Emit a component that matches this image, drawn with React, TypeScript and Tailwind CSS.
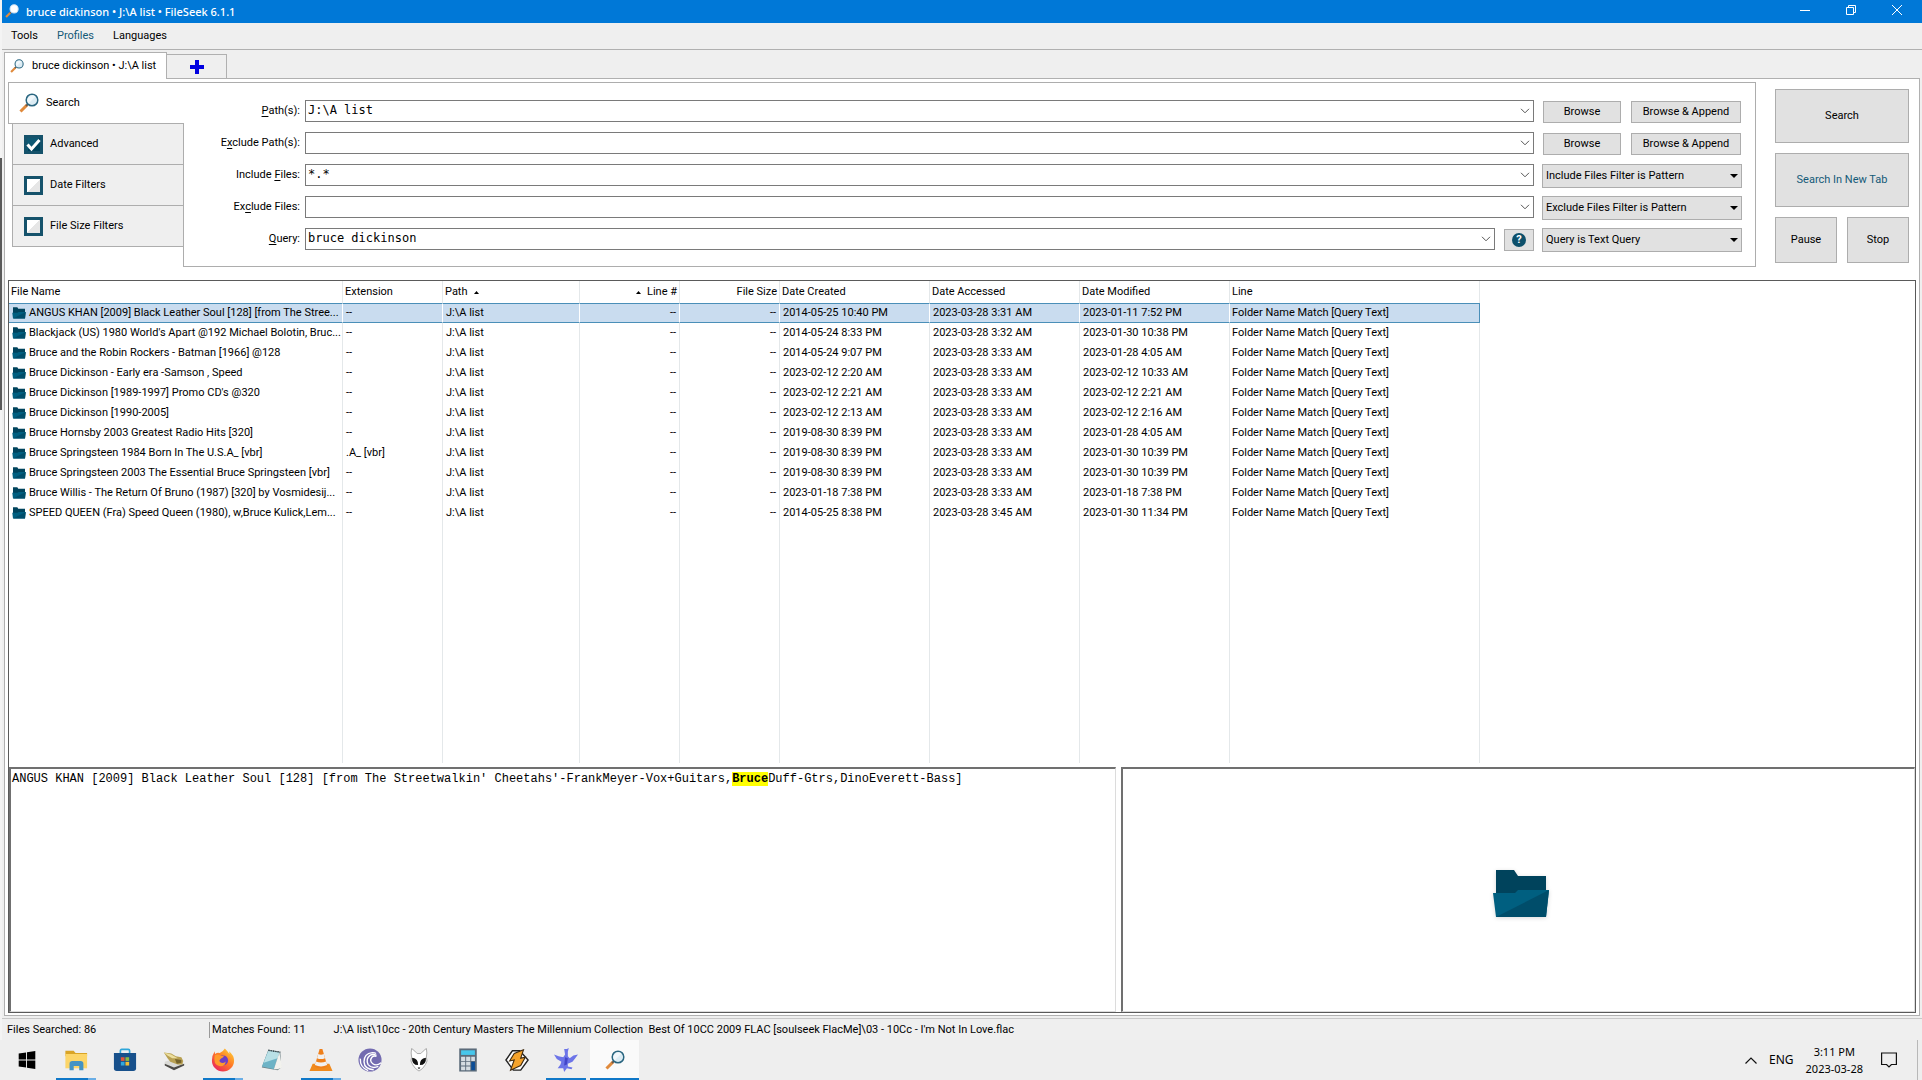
import { useState } from 'react';
import type { ReactNode } from 'react';

const results = [
  { name: 'ANGUS KHAN [2009] Black Leather Soul [128] [from The Stree...', ext: '--', created: '2014-05-25 10:40 PM', accessed: '2023-03-28 3:31 AM', modified: '2023-01-11 7:52 PM' },
  { name: "Blackjack (US) 1980 World's Apart @192 Michael Bolotin, Bruc...", ext: '--', created: '2014-05-24 8:33 PM', accessed: '2023-03-28 3:32 AM', modified: '2023-01-30 10:38 PM' },
  { name: 'Bruce and the Robin Rockers - Batman [1966] @128', ext: '--', created: '2014-05-24 9:07 PM', accessed: '2023-03-28 3:33 AM', modified: '2023-01-28 4:05 AM' },
  { name: 'Bruce Dickinson - Early era -Samson , Speed', ext: '--', created: '2023-02-12 2:20 AM', accessed: '2023-03-28 3:33 AM', modified: '2023-02-12 10:33 AM' },
  { name: "Bruce Dickinson [1989-1997] Promo CD's @320", ext: '--', created: '2023-02-12 2:21 AM', accessed: '2023-03-28 3:33 AM', modified: '2023-02-12 2:21 AM' },
  { name: 'Bruce Dickinson [1990-2005]', ext: '--', created: '2023-02-12 2:13 AM', accessed: '2023-03-28 3:33 AM', modified: '2023-02-12 2:16 AM' },
  { name: 'Bruce Hornsby 2003 Greatest Radio Hits [320]', ext: '--', created: '2019-08-30 8:39 PM', accessed: '2023-03-28 3:33 AM', modified: '2023-01-28 4:05 AM' },
  { name: 'Bruce Springsteen 1984 Born In The U.S.A_ [vbr]', ext: '.A_ [vbr]', created: '2019-08-30 8:39 PM', accessed: '2023-03-28 3:33 AM', modified: '2023-01-30 10:39 PM' },
  { name: 'Bruce Springsteen 2003 The Essential Bruce Springsteen [vbr]', ext: '--', created: '2019-08-30 8:39 PM', accessed: '2023-03-28 3:33 AM', modified: '2023-01-30 10:39 PM' },
  { name: 'Bruce Willis - The Return Of Bruno (1987) [320] by Vosmidesij...', ext: '--', created: '2023-01-18 7:38 PM', accessed: '2023-03-28 3:33 AM', modified: '2023-01-18 7:38 PM' },
  { name: 'SPEED QUEEN (Fra) Speed Queen (1980), w,Bruce Kulick,Lem...', ext: '--', created: '2014-05-25 8:38 PM', accessed: '2023-03-28 3:45 AM', modified: '2023-01-30 11:34 PM' },
];

const columns = [
  { label: 'File Name', width: 'w-[334px]' },
  { label: 'Extension', width: 'w-[100px]' },
  { label: 'Path', width: 'w-[137px]', sort: 'after' },
  { label: 'Line #', width: 'w-[100px]', align: 'text-right', sort: 'before' },
  { label: 'File Size', width: 'w-[100px]', align: 'text-right' },
  { label: 'Date Created', width: 'w-[150px]' },
  { label: 'Date Accessed', width: 'w-[150px]' },
  { label: 'Date Modified', width: 'w-[150px]' },
  { label: 'Line', width: 'w-[250px]' },
];

function Magnifier({ className, lens = '#dcecf4', ring = '#2a6680' }: { className?: string; lens?: string; ring?: string }) {
  return (
    <svg viewBox="0 0 20 20" className={className} aria-hidden="true">
      <path d="M1.5 18.5 8 12" stroke="#e08a3c" strokeWidth="3" />
      <path d="m7 13 2-2" stroke="#6d5a4c" strokeWidth="2" />
      <circle cx="13" cy="7" r="5.8" fill={lens} stroke={ring} strokeWidth="1.5" />
      <path d="M9.5 10.5 16.5 3.5A5 5 0 0 0 9.5 10.5z" fill="#fff" opacity=".6" />
    </svg>
  );
}

function FolderIcon({ className }: { className?: string }) {
  return (
    <svg viewBox="0 0 58 50" className={className} aria-hidden="true">
      <path d="M4 1h18l4 6h28v20H4z" fill="#00435c" />
      <path d="M1 24h22l3-3h31l-3 27H4z" fill="#005f80" />
      <path d="M57 21 4 48h50z" fill="#004d6a" />
    </svg>
  );
}

function SortArrow() {
  return (
    <svg viewBox="0 0 5 3" className="mx-[6px] inline-block h-[3px] w-[5px] align-middle" aria-hidden="true">
      <path d="M0 3h5L2.5 0z" />
    </svg>
  );
}

function ComboBox({ id, value }: { id: string; value: string }) {
  const [text, setText] = useState(value);
  return (
    <div className="flex h-[22px] min-w-0 flex-1 items-center border border-[#7a7a7a] bg-white">
      <input
        id={id}
        value={text}
        onChange={e => setText(e.target.value)}
        className="h-5 min-w-0 flex-1 px-[2px] pb-[2px] font-['DejaVu_Sans_Mono',monospace] text-[12px] leading-4 outline-none"
      />
      <button type="button" aria-label="Show history" className="flex h-5 w-4 items-center justify-center">
        <svg viewBox="0 0 10 6" className="h-[6px] w-[10px]" fill="none" stroke="#555">
          <path d="m1 .8 4 4 4-4" />
        </svg>
      </button>
    </div>
  );
}

function Button({ children, className = '' }: { children: ReactNode; className?: string }) {
  return (
    <button type="button" className={`border border-[#adadad] bg-[#e1e1e1] text-center ${className}`}>
      {children}
    </button>
  );
}

function BrowseButtons() {
  return (
    <div className="flex gap-[10px] pl-[9px] pt-px">
      <Button className="h-[22px] w-[78px]">Browse</Button>
      <Button className="h-[22px] w-[110px]">Browse &amp; Append</Button>
    </div>
  );
}

function FilterSelect({ name, label }: { name: string; label: string }) {
  return (
    <div className="relative ml-2">
      <select aria-label={name} className="block h-6 w-full appearance-none border border-[#adadad] bg-[#e1e1e1] pl-[3px] outline-none">
        <option>{label}</option>
      </select>
      <svg viewBox="0 0 8 4" className="pointer-events-none absolute right-1 top-[10px] h-1 w-2">
        <path d="M0 0h8L4 4z" />
      </svg>
    </div>
  );
}

function FilterTab({ label, on = false }: { label: string; on?: boolean }) {
  const [checked, setChecked] = useState(on);
  return (
    <label className="ml-1 flex h-[41px] items-center gap-[7px] border-x border-b border-[#adadad] bg-[#efefef] pl-[11px]">
      <span className="grid h-[19px] w-[19px]">
        <input
          type="checkbox"
          checked={checked}
          onChange={e => setChecked(e.target.checked)}
          className="col-start-1 row-start-1 h-[19px] w-[19px] appearance-none border-[3px] border-[#15526b] bg-linear-to-br from-white from-50% to-[#e6e6e6] to-50% checked:from-[#0d5873] checked:to-[#00435c]"
        />
        {checked && (
          <svg viewBox="0 0 19 19" className="pointer-events-none col-start-1 row-start-1" fill="none" stroke="#fff" strokeWidth="3">
            <path d="m3.500 9.500 4 4.500 8-9" />
          </svg>
        )}
      </span>
      {label}
    </label>
  );
}

function FieldLabel({ id, before = '', hot, after }: { id: string; before?: string; hot: string; after: string }) {
  return (
    <label htmlFor={id} className="pr-[5px] text-right leading-[22px]">
      {before}
      <u className="underline-offset-2">{hot}</u>
      {after}
    </label>
  );
}

const taskIcons: { name: string; open?: 'many' | 'one' | 'active'; icon: ReactNode }[] = [
  {
    name: 'Start',
    icon: <path d="m4 6 8-1.200v7.700H4zM13 4.600 22 3.300v9.200h-9zM4 13.500h8v7.700L4 20zM13 13.500h9v9.200l-9-1.300z" />,
  },
  {
    name: 'File Explorer',
    open: 'many',
    icon: (
      <>
        <path d="M1.500 3h9l2 2.500H25V9H1.500z" fill="#d9a426" />
        <path d="M1.500 6.500H25V22H1.500z" fill="#fcd568" />
        <path d="M6 24v-7q0-3 3-3h9q3 0 3 3v7h-4.500v-4.500h-6V24z" fill="#4393c4" />
      </>
    ),
  },
  {
    name: 'Microsoft Store',
    icon: (
      <>
        <path d="M8 7V3q0-1.500 1.500-1.500h7Q18 1.500 18 3v4" fill="none" stroke="#2ea6d9" strokeWidth="1.800" />
        <path d="M1 5.500h24V22q0 3-3 3H4q-3 0-3-3z" fill="#17508b" />
        <path d="M8.500 10h4v4h-4z" fill="#e0563a" />
        <path d="M13.500 10h4v4h-4z" fill="#89b940" />
        <path d="M8.500 15h4v4h-4z" fill="#31a8dc" />
        <path d="M13.500 15h4v4h-4z" fill="#f0be36" />
      </>
    ),
  },
  {
    name: 'Organizer',
    icon: (
      <>
        <path d="m3 15 6-2 12 2 3 3-11 4-10-5z" fill="#dadad6" />
        <path d="m3 17 10 4 11-4v2l-11 5-10-5z" fill="#4c4a47" />
        <path d="m2 5 8 1 5 3 6 1 2 4-1 4-5 0-8-3-3-4z" fill="#b8a052" />
        <path d="m2 5 8 2 7 4-6 0-5-3z" fill="#ecdf9f" />
        <path d="m14 12 7 1v3l-5 1z" fill="#75632b" />
      </>
    ),
  },
  {
    name: 'Firefox',
    open: 'many',
    icon: (
      <>
        <defs>
          <linearGradient id="fox" x1="1" y1="0" x2=".2" y2="1">
            <stop offset="0" stopColor="#ffe03a" />
            <stop offset=".5" stopColor="#ff7b26" />
            <stop offset="1" stopColor="#e9205c" />
          </linearGradient>
        </defs>
        <path d="M15 .5q3 3 5 6 0-2-.5-3Q25 8 25 13.500a12 12 0 0 1-24 0Q1 8 4 3.500q0 2 .5 3 2.500-2 5-1Q13 4 15 .5z" fill="url(#fox)" />
        <circle cx="13" cy="13.500" r="5.500" fill="#6c3fc5" />
        <path d="M4 8q3-2 6 0 2 1 4 .5 0 2-3 3-3 2-1 4 3 2 6-1-1 6-7 5-7-2-5-11.500z" fill="#ff9a2b" />
      </>
    ),
  },
  {
    name: 'Notepad',
    icon: (
      <>
        <path d="m9 2 13 2 1 17-4 3-17-3z" fill="#6f8186" />
        <path d="m9 3 12 2-6 18-13-3z" fill="#6db3c6" />
        <path d="m9 3 12 2-2 6L4 16z" fill="#b9e0e6" />
        <path d="m21 5 3 16-5 2-4 0z" fill="#f2f2ee" />
        <path d="M9 2.500 22 4.500" stroke="#3c4a50" strokeWidth="1.500" strokeDasharray="1.500 1" />
      </>
    ),
  },
  {
    name: 'VLC',
    open: 'many',
    icon: (
      <>
        <path d="M4 17h18l3.500 8H.5z" fill="#f08a1d" />
        <path d="M11.500 1h3L20 20q-7 4-14 0z" fill="#ef7f1a" />
        <path d="M10 6.500 8.700 11q4.300 2 8.600 0L16 6.500q-3 1.500-6 0z" fill="#f1f1f1" />
        <path d="m7.500 14.500-1.200 4q6.700 3 13.400 0l-1.200-4q-5.500 2.500-11 0z" fill="#f1f1f1" />
      </>
    ),
  },
  {
    name: 'BitTorrent',
    icon: (
      <>
        <circle cx="13" cy="13" r="12.500" fill="#736bb0" />
        <g fill="none" stroke="#fff" strokeWidth="1.500">
          <path d="M25 16q-5 4-9 1-4-3-1-7 2-2 5-1" />
          <path d="M22 20q-7 3-11-2-3-6 2-10 3-2 7 0" />
          <path d="M17 23.500Q7 23 6.500 15q0-9 9-10 3 0 4 1" />
          <path d="M11 24.500Q2 21 2.500 11.500" />
        </g>
      </>
    ),
  },
  {
    name: 'foobar2000',
    icon: (
      <>
        <path d="M5 .5q4 3 6 5.500h4q2-2.500 6-5.500 1 5 0 9.500 2 4-1 8-3 5-7 7-4-2-7-7-3-4-1-8-1-4.500 0-9.500z" fill="#fff" stroke="#a5a5a5" />
        <path d="M5.500 10.500q7 1 6.500 8-7 0-6.500-8zM20.500 10.500q-7 1-6.500 8 7 0 6.500-8zM11.500 21h3L13 23z" fill="#111" />
      </>
    ),
  },
  {
    name: 'Calculator',
    icon: (
      <>
        <path d="M3.500.5h19v25h-19z" fill="#5b6b7a" />
        <path d="M5.500 2.500h15v5h-15z" fill="#47c7ec" />
        <path d="M5.500 9.500h4.500V14H5.500zM11 9.500h4.500V14H11zM16.500 9.500H20.500V14h-4zM5.500 15h4.500v4H5.500zM11 15h4.500v4H11zM5.500 20h4.500v4H5.500zM11 20h4.500v4H11z" fill="#d5dce2" />
        <path d="M16.500 15h4v9h-4z" fill="#0b4d96" />
      </>
    ),
  },
  {
    name: 'Winamp',
    icon: (
      <>
        <path d="M8 3h8l9 10-8 11H9L1 13z" fill="#fff" stroke="#222" strokeWidth="1.500" />
        <path d="m20 2-10 4-5 8 5-1-4 11 11-5 5-9-5 1z" fill="#f5a32b" stroke="#3f2a10" strokeWidth="1.200" />
      </>
    ),
  },
  {
    name: 'Soulseek',
    open: 'one',
    icon: (
      <>
        <path d="M11 1h3l2-1-1 4v5l2 2 4-3 5-1-3 4-3 4-5 2v3l5 1-1 2-5-1-3 4-1-4-6 0 3-4 1-3-5-3L0 7l5 2 5 1 2-3z" fill="#6c74e8" />
        <path d="m12 10 3 1-1 7-3 1z" fill="#4346c9" />
      </>
    ),
  },
];

function TaskButton({ name, open, children }: { name: string; open?: 'many' | 'one' | 'active'; children: ReactNode }) {
  return (
    <button aria-label={name} className={`relative flex h-10 w-[49px] items-center justify-center ${open === 'active' ? 'bg-[#fafafa]' : ''}`}>
      {children}
      {open && (
        <span className={`absolute bottom-0 flex h-[2px] ${open === 'active' ? 'w-[49px]' : 'w-10'}`}>
          <span className="flex-1 bg-[#0f78c8]" />
          {open === 'many' && <span className="w-2 bg-[#6aaee6]" />}
        </span>
      )}
    </button>
  );
}

export default function App() {
  return (
    <div className="flex min-h-screen flex-col bg-[#efefef] font-['Roboto','Noto_Sans',sans-serif] text-[11px] leading-4 text-black">
      <div className="flex flex-1">
        {/* sliver of the window behind */}
        <div className="flex w-[2px] flex-col bg-[#f4f4f4]">
          <div className="h-[158px]" />
          <div className="h-[252px] bg-[#5a5a5a]" />
        </div>

        <div className="flex min-w-0 flex-1 flex-col">
          <header className="flex h-[23px] items-start bg-[#0078d7] pl-[3px] pr-[2px] text-white">
            <Magnifier className="mt-1 h-[14px] w-[14px]" lens="#fff" ring="#cfe3f2" />
            <h1 className="ml-[7px] mt-1 flex-1 font-['Noto_Sans',sans-serif] font-medium">bruce dickinson • J:\A list • FileSeek 6.1.1</h1>
            <button aria-label="Minimize" className="flex h-5 w-[46px] items-center justify-center">
              <svg viewBox="0 0 10 10" className="h-[10px] w-[10px]" stroke="#fff"><path d="M0 5.500h10" /></svg>
            </button>
            <button aria-label="Restore" className="flex h-5 w-[46px] items-center justify-center">
              <svg viewBox="0 0 10 10" className="h-[10px] w-[10px]" fill="none" stroke="#fff"><path d="M.5 2.500h7v7h-7zM2.500 2.500v-2h7v7h-2" /></svg>
            </button>
            <button aria-label="Close" className="flex h-5 w-[46px] items-center justify-center">
              <svg viewBox="0 0 10 10" className="h-[10px] w-[10px]" stroke="#fff"><path d="m0 0 10 10M10 0 0 10" /></svg>
            </button>
          </header>

          <nav className="flex h-[27px] items-center gap-[19px] border-b border-[#b0b0b0] pl-[9px]">
            <button>Tools</button>
            <button className="text-[#145a78]">Profiles</button>
            <button>Languages</button>
          </nav>

          {/* Document tabs */}
          <div className="flex h-7 items-end pl-[2px]">
            <button className="relative z-10 -mb-px flex h-[27px] w-[163px] items-center gap-2 border border-b-0 border-[#b0b0b0] bg-white pl-[5px]">
              <Magnifier className="h-[14px] w-[14px]" />
              bruce dickinson • J:\A list
            </button>
            <button aria-label="New tab" className="flex h-6 w-[60px] items-center justify-center border border-b-0 border-l-0 border-[#b0b0b0]">
              <svg viewBox="0 0 14 14" className="h-[14px] w-[14px]" fill="#0000e0"><path d="M5 0h4v5h5v4H9v5H5V9H0V5h5z" /></svg>
            </button>
          </div>

          <main className="mx-[2px] flex flex-1 flex-col border border-[#b0b0b0] bg-white px-[3px] pb-[2px] pt-[3px]">
            {/* Search panel */}
            <div className="flex">
              <div className="z-10 -mr-px w-[176px]">
                <button className="flex h-[42px] w-full items-center gap-[7px] border border-r-0 border-[#adadad] bg-white pl-[10px]">
                  <Magnifier className="h-5 w-5" />
                  Search
                </button>
                <FilterTab label="Advanced" on />
                <FilterTab label="Date Filters" />
                <FilterTab label="File Size Filters" />
              </div>

              <form className="grid flex-1 auto-rows-[24px] grid-cols-[121px_1fr_208px] gap-y-2 border border-[#adadad] pb-[14px] pr-[13px] pt-[17px]">
                <FieldLabel id="paths" hot="P" after="ath(s):" />
                <ComboBox id="paths" value="J:\A list" />
                <BrowseButtons />

                <FieldLabel id="exclude-paths" before="E" hot="x" after="clude Path(s):" />
                <ComboBox id="exclude-paths" value="" />
                <BrowseButtons />

                <FieldLabel id="include-files" before="Include " hot="F" after="iles:" />
                <ComboBox id="include-files" value="*.*" />
                <FilterSelect name="Include filter type" label="Include Files Filter is Pattern" />

                <FieldLabel id="exclude-files" before="Ex" hot="c" after="lude Files:" />
                <ComboBox id="exclude-files" value="" />
                <FilterSelect name="Exclude filter type" label="Exclude Files Filter is Pattern" />

                <FieldLabel id="query" hot="Q" after="uery:" />
                <div className="flex gap-[9px]">
                  <ComboBox id="query" value="bruce dickinson" />
                  <Button className="mt-px flex h-[22px] w-[30px] items-center justify-center">
                    <span className="flex h-[14px] w-[14px] items-center justify-center rounded-full bg-[#0d506b] font-bold text-white">?</span>
                  </Button>
                </div>
                <FilterSelect name="Query type" label="Query is Text Query" />
              </form>

              <div className="ml-[19px] mr-[7px] grid w-[134px] grid-cols-2 grid-rows-[54px_54px_46px] gap-[10px] pt-[7px]">
                <Button className="col-span-2">Search</Button>
                <Button className="col-span-2 text-[#145a78]">Search In New Tab</Button>
                <Button>Pause</Button>
                <Button>Stop</Button>
              </div>
            </div>

            <div className="mt-[13px] flex flex-1 flex-col border border-[#5a5a5a]">
              {/* Results */}
              <div className="grid flex-1">
                <table className="h-full w-full table-fixed border-separate border-spacing-0 whitespace-nowrap">
                  <thead>
                    <tr className="h-[22px]">
                      {columns.map(col => (
                        <th key={col.label} className={`border-r border-[#e4e8ea] px-[2px] py-0 font-normal ${col.width} ${col.align ?? 'text-left'}`}>
                          {col.sort === 'before' && <SortArrow />}
                          {col.label}
                          {col.sort === 'after' && <SortArrow />}
                        </th>
                      ))}
                      <td />
                    </tr>
                  </thead>
                  <tbody>
                    {results.map((row, i) => {
                      const cell = i === 0
                        ? 'border-y border-y-[#4a8fb8] border-r border-r-white bg-[#c9dcef] p-0 px-[3px]'
                        : 'border-r border-[#e4e8ea] p-0 px-[3px]';
                      return (
                        <tr key={row.name} className="h-5">
                          <td className={cell}>
                            <div className="flex items-center gap-[3px]">
                              <FolderIcon className="h-3 w-[14px] shrink-0" />
                              {row.name}
                            </div>
                          </td>
                          <td className={cell}>{row.ext}</td>
                          <td className={cell}>J:\A list</td>
                          <td className={`${cell} text-right`}>--</td>
                          <td className={`${cell} text-right`}>--</td>
                          <td className={cell}>{row.created}</td>
                          <td className={cell}>{row.accessed}</td>
                          <td className={cell}>{row.modified}</td>
                          <td className={i === 0 ? 'border border-l-0 border-[#4a8fb8] bg-[#c9dcef] p-0 px-[2px]' : 'border-r border-[#e4e8ea] p-0 px-[2px]'}>
                            Folder Name Match [Query Text]
                          </td>
                          <td />
                        </tr>
                      );
                    })}
                    {/* carries the column lines to the bottom */}
                    <tr>
                      {columns.map(col => <td key={col.label} className="border-r border-[#e4e8ea] p-0" />)}
                      <td />
                    </tr>
                  </tbody>
                </table>
              </div>

              {/* Preview */}
              <div className="mt-1 grid h-[245px] grid-cols-[1107fr_794fr] gap-[5px]">
                <div className="min-w-0 border-b border-l-2 border-r border-t-2 border-b-[#dcdcdc] border-l-[#707070] border-r-[#dcdcdc] border-t-[#707070] pl-px pt-[2px] font-['Liberation_Mono',monospace] text-[12px] leading-4">
                  ANGUS KHAN [2009] Black Leather Soul [128] [from The Streetwalkin' Cheetahs'-FrankMeyer-Vox+Guitars,
                  <mark className="bg-[#ffff00] font-bold text-black">Bruce</mark>
                  Duff-Gtrs,DinoEverett-Bass]
                </div>
                <div className="flex min-w-0 items-center justify-center border-b border-l-2 border-r border-t-2 border-b-[#dcdcdc] border-l-[#707070] border-r-[#dcdcdc] border-t-[#707070] pl-1 pt-2">
                  <FolderIcon className="h-[50px] w-[58px] drop-shadow-sm" />
                </div>
              </div>
            </div>
          </main>

          <div className="mt-[2px] flex h-[22px] items-center border-t border-[#c8c8c8] pl-[5px]">
            <span className="w-[202px]">Files Searched: 86</span>
            <span className="border-l border-[#9a9a9a] pl-[2px]">Matches Found: 11</span>
            <span className="ml-7 whitespace-pre">J:\A list\10cc - 20th Century Masters The Millennium Collection  Best Of 10CC 2009 FLAC [soulseek FlacMe]\03 - 10Cc - I'm Not In Love.flac</span>
          </div>
        </div>
      </div>

      {/* Taskbar */}
      <footer className="flex h-10 items-center bg-[#eeeeee] pl-[2px]">
        {taskIcons.map(item => (
          <TaskButton key={item.name} name={item.name} open={item.open}>
            <svg viewBox="0 0 26 26" className="h-6 w-6">{item.icon}</svg>
          </TaskButton>
        ))}
        <TaskButton name="FileSeek" open="active">
          <Magnifier className="h-5 w-5" />
        </TaskButton>

        <div className="ml-auto flex h-full items-center border-r border-[#b8b8b8] pr-5 font-['Noto_Sans',sans-serif]">
          <button aria-label="Show hidden icons" className="mr-3">
            <svg viewBox="0 0 12 7" className="h-[7px] w-3" fill="none" stroke="#111" strokeWidth="1.200"><path d="M.5 6.500 6 1l5.500 5.500" /></svg>
          </button>
          <button className="mr-3 text-[12px]">ENG</button>
          <button className="text-center leading-[17px]">
            3:11 PM<br />2023-03-28
          </button>
          <button aria-label="Notifications" className="ml-[18px]">
            <svg viewBox="0 0 16 16" className="h-4 w-4" fill="none" stroke="#111" strokeWidth="1.200"><path d="M.6 1h14.800v11.500h-5L8 15l-2.400-2.500h-5z" /></svg>
          </button>
        </div>
        <div className="w-1" />
      </footer>
    </div>
  );
}
